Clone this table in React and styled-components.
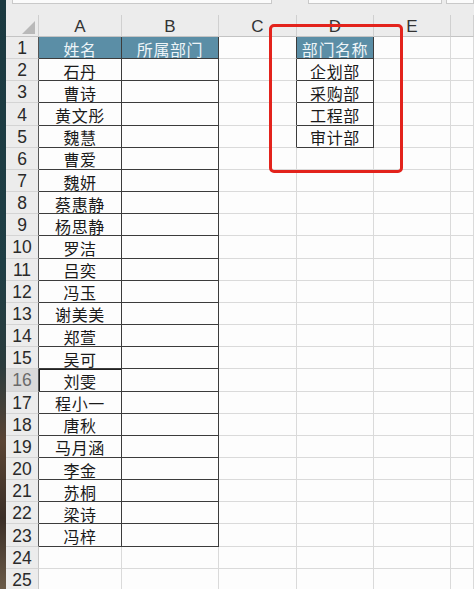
import React from "react";
import styled, { createGlobalStyle } from "styled-components";

const Global = createGlobalStyle`
  html, body { margin: 0; padding: 0; background: #fdfdfd; }
  body { font-family: "Liberation Sans", "Noto Sans CJK SC", sans-serif; }
  * { box-sizing: border-box; }
`;

const Page = styled.div`
  position: relative;
  display: flex;
  width: 474px;
  height: 589px;
  overflow: hidden;
`;

const Strip = styled.div`
  width: 6px;
  flex: none;
  background: linear-gradient(to bottom, #1b3940 0%, #1f3e45 45%, #2a3b3c 62%, #5a4434 75%, #3a2e26 88%, #6a5a48 100%);
`;

const Sheet = styled.div`
  flex: 1;
  display: flex;
  flex-direction: column;
  background: #fdfdfd;
`;

const TopBar = styled.div`
  height: 15px;
  flex: none;
  background: #ececec;
  display: flex;
  align-items: flex-start;
  padding-left: 6px;
  gap: 4px;
`;

const BarBox = styled.div`
  height: 4px;
  width: ${(p) => p.$w}px;
  flex: ${(p) => (p.$grow ? 1 : "none")};
  margin-left: ${(p) => p.$ml || 0}px;
  background: #fbfbfb;
  border: 1px solid #c9c9c9;
  border-top: none;
`;

const Grid = styled.div`
  display: grid;
  grid-template-columns: 33px 83px 97px 78px 77px 77px 1fr;
  grid-template-rows: 22px repeat(25, 22.17px);
`;

const Corner = styled.div`
  position: relative;
  background: #ececec;
  border-right: 1px solid #cfcfcf;
  border-bottom: 1px solid #c4c4c4;
  &::after {
    content: "";
    position: absolute;
    right: 3px;
    bottom: 2px;
    width: 0;
    height: 0;
    border-left: 13px solid transparent;
    border-bottom: 13px solid #b9b9b9;
  }
`;

const ColHead = styled.div`
  background: #ececec;
  border-right: 1px solid #d0d0d0;
  border-bottom: 1px solid #c4c4c4;
  color: #333;
  font-size: 17px;
  display: flex;
  align-items: center;
  justify-content: center;
  padding-top: 2px;
`;

const RowHead = styled.div`
  background: ${(p) => (p.$sel ? "#dadada" : "#ececec")};
  color: ${(p) => (p.$sel ? "#6a6a6a" : "#2a2a2a")};
  border-right: 1px solid ${(p) => (p.$dark ? "#555" : "#c6c6c6")};
  border-bottom: 1px solid #d4d4d4;
  font-size: 17.5px;
  display: flex;
  align-items: center;
  justify-content: center;
  padding-top: 2px;
`;

const Cell = styled.div`
  background: ${(p) => (p.$head ? "#5b8ea6" : "#fdfdfd")};
  color: ${(p) => (p.$head ? "#eef5f8" : "#1a1a1a")};
  border-right: 1px solid ${(p) => (p.$rb ? "#3c3c3c" : "#dadada")};
  border-bottom: 1px solid ${(p) => (p.$bb ? "#3c3c3c" : "#dadada")};
  box-shadow: ${(p) => (p.$active ? "inset 1px 0 0 #222, inset 0 1px 0 #222" : "none")};
  font-family: "Noto Sans CJK SC", sans-serif;
  font-size: 16px;
  letter-spacing: 0.6px;
  line-height: 1;
  display: flex;
  align-items: center;
  justify-content: center;
  padding-top: 2px;
  white-space: nowrap;
`;

const Highlight = styled.div`
  position: absolute;
  left: 269px;
  top: 24px;
  width: 134px;
  height: 149px;
  border: 3px solid #e3231c;
  border-radius: 5px;
  pointer-events: none;
`;

const names = [
  "姓名", "石丹", "曹诗", "黄文彤", "魏慧", "曹爱", "魏妍", "蔡惠静", "杨思静", "罗洁",
  "吕奕", "冯玉", "谢美美", "郑萱", "吴可", "刘雯", "程小一", "唐秋", "马月涵", "李金",
  "苏桐", "梁诗", "冯梓",
];
const depts = ["部门名称", "企划部", "采购部", "工程部", "审计部"];

export default function App() {
  const rows = Array.from({ length: 25 }, (_, i) => i + 1);
  return (
    <Page>
      <Global />
      <Strip />
      <Sheet>
        <TopBar>
          <BarBox $w={260} />
          <BarBox $w={134} $ml={32} />
          <BarBox $grow />
        </TopBar>
        <Grid>
          <Corner />
          {["A", "B", "C", "D", "E", ""].map((c, i) => (
            <ColHead key={i}>{c}</ColHead>
          ))}
          {rows.map((r) => {
            const inT = r <= 23;
            const inD = r <= 5;
            return (
              <React.Fragment key={r}>
                <RowHead $dark={inT} $sel={r === 16}>{r}</RowHead>
                <Cell $rb={inT} $bb={inT} $head={r === 1} $active={r === 16}>
                  {inT ? names[r - 1] : ""}
                </Cell>
                <Cell $rb={inT} $bb={inT} $head={r === 1}>
                  {r === 1 ? "所属部门" : ""}
                </Cell>
                <Cell $rb={inD} />
                <Cell $rb={inD} $bb={inD} $head={r === 1}>
                  {inD ? depts[r - 1] : ""}
                </Cell>
                <Cell />
                <Cell />
              </React.Fragment>
            );
          })}
        </Grid>
      </Sheet>
      <Highlight />
    </Page>
  );
}
